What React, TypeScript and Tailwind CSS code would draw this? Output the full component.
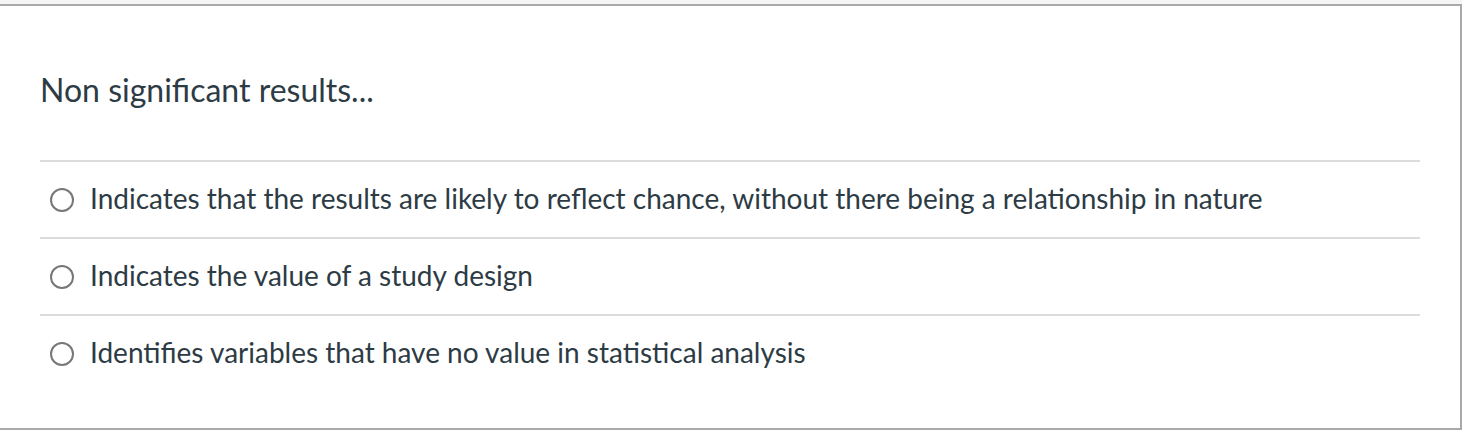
const answers = [
  "Indicates that the results are likely to reflect chance, without there being a relationship in nature",
  "Indicates the value of a study design",
  "Identifies variables that have no value in statistical analysis",
];

export default function App() {
  return (
    <div className="h-[430px] w-[1462px] bg-[#f5f5f5] pt-1" style={{ fontFamily: "Lato, 'Open Sans', sans-serif" }}>
      <div className="h-[426px] border-y-2 border-r-2 border-[#a9a9a9] bg-white">
        <div className="pl-10 pr-10 pt-[62px]">
          <h2 className="h-[92px] text-[32px] leading-[44px] text-[#2d3b45]">Non significant results...</h2>
          <ul>
            {answers.map((a) => (
              <li key={a} className="flex h-[77px] items-center border-t-2 border-[#dcdcdc] pb-[3px] pl-[10px]">
                <span className="mt-[3px] h-[24px] w-[24px] shrink-0 rounded-full border-2 border-[#777]" />
                <span className="pl-[16px] text-[28px] text-[#2d3b45]">{a}</span>
              </li>
            ))}
          </ul>
        </div>
      </div>
    </div>
  );
}
